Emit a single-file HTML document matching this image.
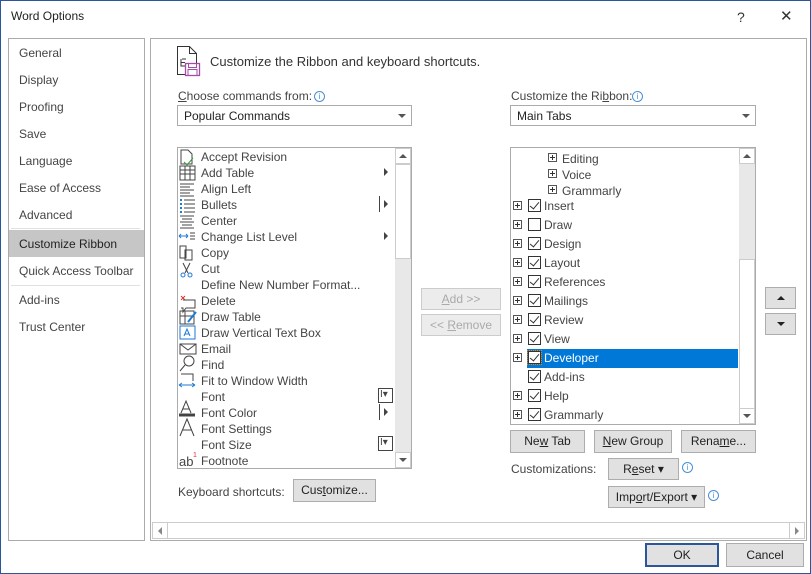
<!DOCTYPE html>
<html><head><meta charset="utf-8"><style>
*{box-sizing:border-box;margin:0;padding:0}
body{width:811px;height:574px;overflow:hidden;background:#fff;font-family:"Liberation Sans",sans-serif;font-size:12px;color:#444;position:relative}
.a{position:absolute}
.frame{left:0;top:0;width:811px;height:574px;border:1px solid #2b579a}
.box{border:1px solid #ababab;background:#fff}
.btn{position:absolute;background:#e1e1e1;border:1px solid #adadad;color:#222;text-align:center;font-size:12px}
.nav{left:19px;font-size:12px;color:#444}
.li{position:absolute;left:23px;font-size:12px;color:#444;white-space:nowrap}
.ri{position:absolute;font-size:12px;color:#444;white-space:nowrap}
.pl{position:absolute;width:9px;height:9px;border:1px solid #555;}
.pl:before{content:"";position:absolute;left:1px;top:3px;width:5px;height:1px;background:#333}
.pl:after{content:"";position:absolute;left:3px;top:1px;width:1px;height:5px;background:#333}
.cb{position:absolute;width:13px;height:13px;border:1px solid #333;background:#fff}
.cb.c:after{content:"";position:absolute;left:3px;top:0px;width:4px;height:8px;border-right:1.3px solid #333;border-bottom:1.3px solid #333;transform:rotate(40deg)}
.arr{position:absolute;width:0;height:0;border-left:4px solid transparent;border-right:4px solid transparent}
u{text-decoration:underline}
.info{position:absolute;width:11px;height:11px;border:1px solid #4a8fd6;border-radius:50%;color:#4a8fd6;font-size:8px;line-height:9px;text-align:center}
</style></head><body>
<div class="a frame"></div>
<div class="a" style="left:11px;top:9px;font-size:12px;color:#222">Word Options</div>
<div class="a" style="left:737px;top:9px;font-size:14px;color:#333">?</div>
<div class="a" style="left:780px;top:7px;font-size:15px;color:#333">✕</div>

<!-- nav -->
<div class="a box" style="left:8px;top:38px;width:137px;height:503px"></div>
<div class="a nav" style="top:46px">General</div>
<div class="a nav" style="top:73px">Display</div>
<div class="a nav" style="top:100px">Proofing</div>
<div class="a nav" style="top:127px">Save</div>
<div class="a nav" style="top:154px">Language</div>
<div class="a nav" style="top:181px">Ease of Access</div>
<div class="a nav" style="top:208px">Advanced</div>
<div class="a" style="left:11px;top:228px;width:129px;height:1px;background:#e1e1e1"></div>
<div class="a" style="left:9px;top:230px;width:135px;height:27px;background:#c6c6c6"></div>
<div class="a nav" style="top:237px;color:#222">Customize Ribbon</div>
<div class="a nav" style="top:264px">Quick Access Toolbar</div>
<div class="a" style="left:11px;top:285px;width:129px;height:1px;background:#e1e1e1"></div>
<div class="a nav" style="top:293px">Add-ins</div>
<div class="a nav" style="top:320px">Trust Center</div>

<!-- main -->
<div class="a box" style="left:150px;top:38px;width:657px;height:503px"></div>
<svg class="a" style="left:176px;top:45px" width="30" height="32" viewBox="0 0 30 32"><path d="M1.5 1.5h12l7 7v21h-19z" fill="#fff" stroke="#333"/><path d="M13.5 1.5v7h7" fill="none" stroke="#333"/><path d="M6 14h4M5 14v7h4M5 17.5h4" stroke="#333" fill="none"/><rect x="9.5" y="18.5" width="14" height="12" fill="#fff" stroke="#a64ca6" stroke-width="1.3"/><rect x="12.5" y="18.5" width="8" height="4" fill="none" stroke="#a64ca6"/><rect x="12" y="24.5" width="9" height="6" fill="none" stroke="#a64ca6"/></svg>
<div class="a" style="left:210px;top:54px;font-size:13px;color:#333">Customize the Ribbon and keyboard shortcuts.</div>

<div class="a" style="left:178px;top:89px"><u>C</u>hoose commands from:</div>
<div class="info" style="left:314px;top:91px">i</div>
<div class="a box" style="left:177px;top:105px;width:235px;height:21px"></div>
<div class="a" style="left:184px;top:109px;color:#222">Popular Commands</div>
<div class="arr" style="left:398px;top:114px;border-top:4px solid #555"></div>

<div class="a" style="left:511px;top:89px">Customize the Ri<u>b</u>bon:</div>
<div class="info" style="left:632px;top:91px">i</div>
<div class="a box" style="left:510px;top:105px;width:246px;height:21px"></div>
<div class="a" style="left:517px;top:109px;color:#222">Main Tabs</div>
<div class="arr" style="left:742px;top:114px;border-top:4px solid #555"></div>

<!-- left list -->
<div class="a box" style="left:177px;top:147px;width:235px;height:322px"></div>
<div class="a" style="left:395px;top:148px;width:16px;height:320px;background:#e8e8e8"></div>
<div class="a" style="left:395px;top:148px;width:16px;height:16px;background:#fff;border:1px solid #ccc"></div>
<div class="arr" style="left:399px;top:154px;border-bottom:4px solid #555"></div>
<div class="a" style="left:395px;top:164px;width:16px;height:95px;background:#fff;border:1px solid #ccc"></div>
<div class="a" style="left:395px;top:452px;width:16px;height:16px;background:#fff;border:1px solid #ccc"></div>
<div class="arr" style="left:399px;top:458px;border-top:4px solid #555"></div>
<div class="a" style="left:178px;top:148px;width:216px;height:320px;overflow:hidden">
<svg class="a" style="left:0;top:0" width="22" height="320" viewBox="0 0 22 320" fill="none" stroke="#444">
<path d="M3 2h7l4 4v10H3z"/><path d="M6 14l3 3 6-7" stroke="#3a9a3a"/>
<rect x="2" y="18" width="15" height="14"/><path d="M2 22h15M2 26h15M7 18v14M12 18v14"/>
<path d="M2 36h14M2 39h10M2 42h14M2 45h10M2 48h14"/>
<path d="M6 52h11M6 56h11M6 60h11M6 64h11" /><path d="M2 52h2M2 56h2M2 60h2M2 64h2" stroke="#1e7ad6" stroke-width="2"/>
<path d="M2 68h14M4 71h10M2 74h14M4 77h10M2 80h14"/>
<path d="M1 88h9M1 88l2-2M1 88l2 2M10 88l-2-2M10 88l-2 2" stroke="#1e7ad6"/><path d="M12 85h5M12 88h5M12 91h5"/>
<path d="M2 98h6v12H2zM7 102h7v10H7z"/>
<path d="M5 115l5 10M12 115l-5 10" /><circle cx="5" cy="127" r="2" stroke="#1e7ad6"/><circle cx="12" cy="127" r="2" stroke="#1e7ad6"/>
<path d="M3 148l4 4M7 148l-4 4" stroke="#e03030"/><path d="M5 152h12v8H8l-3 4v-4H3"/>
<rect x="2" y="163" width="14" height="13"/><path d="M2 168h14M7 163v13"/><path d="M10 174l8-10" stroke="#1e7ad6" stroke-width="2"/>
<rect x="2" y="178" width="15" height="13" stroke="#1e7ad6"/><path d="M6 188l3-7 3 7M7 186h4" stroke="#1e7ad6"/>
<path d="M2 196h16v10H2zM2 196l8 6 8-6"/>
<circle cx="11" cy="213" r="5"/><path d="M7 217l-5 6"/>
<path d="M3 226h12v7" /><path d="M1 237h16M1 237l3-2M1 237l3 2M17 237l-3-2M17 237l-3 2" stroke="#1e7ad6"/>
<path d="M3 265l5-12 5 12M4.5 261h7"/><path d="M1 267h16" stroke="#444" stroke-width="3"/>
<path d="M2 288l7-17 7 17M4.5 282h9"/>
<text x="1" y="318" font-size="13" fill="#444" stroke="none" font-family="Liberation Sans">ab</text><text x="15" y="309" font-size="7" fill="#e03030" stroke="none" font-family="Liberation Sans">1</text>
</svg>
<div class="li" style="top:2px">Accept Revision</div>
<div class="li" style="top:18px">Add Table</div>
<div class="li" style="top:34px">Align Left</div>
<div class="li" style="top:50px">Bullets</div>
<div class="li" style="top:66px">Center</div>
<div class="li" style="top:82px">Change List Level</div>
<div class="li" style="top:98px">Copy</div>
<div class="li" style="top:114px">Cut</div>
<div class="li" style="top:130px">Define New Number Format...</div>
<div class="li" style="top:146px">Delete</div>
<div class="li" style="top:162px">Draw Table</div>
<div class="li" style="top:178px">Draw Vertical Text Box</div>
<div class="li" style="top:194px">Email</div>
<div class="li" style="top:210px">Find</div>
<div class="li" style="top:226px">Fit to Window Width</div>
<div class="li" style="top:242px">Font</div>
<div class="li" style="top:258px">Font Color</div>
<div class="li" style="top:274px">Font Settings</div>
<div class="li" style="top:290px">Font Size</div>
<div class="li" style="top:306px">Footnote</div>
</div>
<div class="a" style="left:384px;top:168px;border-left:4px solid #444;border-top:4px solid transparent;border-bottom:4px solid transparent"></div>
<div class="a" style="left:379px;top:196px;width:1px;height:16px;background:#444"></div>
<div class="a" style="left:384px;top:200px;border-left:4px solid #444;border-top:4px solid transparent;border-bottom:4px solid transparent"></div>
<div class="a" style="left:384px;top:232px;border-left:4px solid #444;border-top:4px solid transparent;border-bottom:4px solid transparent"></div>
<div class="a" style="left:378px;top:388px;width:15px;height:15px;border:1px solid #444;font-size:10px;line-height:12px;padding-left:1px">I▾</div>
<div class="a" style="left:379px;top:404px;width:1px;height:16px;background:#444"></div>
<div class="a" style="left:384px;top:408px;border-left:4px solid #444;border-top:4px solid transparent;border-bottom:4px solid transparent"></div>
<div class="a" style="left:378px;top:436px;width:15px;height:15px;border:1px solid #444;font-size:10px;line-height:12px;padding-left:1px">I▾</div>

<!-- middle buttons -->
<div class="btn" style="left:421px;top:288px;width:80px;height:22px;line-height:20px;color:#aaa;border-color:#ccc;background:#ececec"><u>A</u>dd &gt;&gt;</div>
<div class="btn" style="left:421px;top:314px;width:80px;height:22px;line-height:20px;color:#aaa;border-color:#ccc;background:#ececec">&lt;&lt; <u>R</u>emove</div>

<!-- right list -->
<div class="a box" style="left:510px;top:147px;width:246px;height:278px"></div>
<div class="a" style="left:739px;top:148px;width:16px;height:276px;background:#e8e8e8"></div>
<div class="a" style="left:739px;top:148px;width:16px;height:16px;background:#fff;border:1px solid #ccc"></div>
<div class="arr" style="left:743px;top:154px;border-bottom:4px solid #555"></div>
<div class="a" style="left:739px;top:259px;width:16px;height:150px;background:#fff;border:1px solid #ccc"></div>
<div class="a" style="left:739px;top:408px;width:16px;height:16px;background:#fff;border:1px solid #ccc"></div>
<div class="arr" style="left:743px;top:414px;border-top:4px solid #555"></div>
<div class="a" style="left:527px;top:349px;width:211px;height:19px;background:#0078d7"></div>

<div class="pl" style="left:548px;top:153px"></div><div class="ri" style="left:562px;top:152px">Editing</div>
<div class="pl" style="left:548px;top:169px"></div><div class="ri" style="left:562px;top:168px">Voice</div>
<div class="pl" style="left:548px;top:185px"></div><div class="ri" style="left:562px;top:184px">Grammarly</div>

<div class="pl" style="left:513px;top:201px"></div><div class="cb c" style="left:528px;top:199px"></div><div class="ri" style="left:544px;top:199px">Insert</div>
<div class="pl" style="left:513px;top:220px"></div><div class="cb" style="left:528px;top:218px"></div><div class="ri" style="left:544px;top:218px">Draw</div>
<div class="pl" style="left:513px;top:239px"></div><div class="cb c" style="left:528px;top:237px"></div><div class="ri" style="left:544px;top:237px">Design</div>
<div class="pl" style="left:513px;top:258px"></div><div class="cb c" style="left:528px;top:256px"></div><div class="ri" style="left:544px;top:256px">Layout</div>
<div class="pl" style="left:513px;top:277px"></div><div class="cb c" style="left:528px;top:275px"></div><div class="ri" style="left:544px;top:275px">References</div>
<div class="pl" style="left:513px;top:296px"></div><div class="cb c" style="left:528px;top:294px"></div><div class="ri" style="left:544px;top:294px">Mailings</div>
<div class="pl" style="left:513px;top:315px"></div><div class="cb c" style="left:528px;top:313px"></div><div class="ri" style="left:544px;top:313px">Review</div>
<div class="pl" style="left:513px;top:334px"></div><div class="cb c" style="left:528px;top:332px"></div><div class="ri" style="left:544px;top:332px">View</div>
<div class="pl" style="left:513px;top:353px"></div><div class="cb c" style="left:528px;top:351px;outline:1px dotted #f08000"></div><div class="ri" style="left:544px;top:351px;color:#fff">Developer</div>
<div class="cb c" style="left:528px;top:370px"></div><div class="ri" style="left:544px;top:370px">Add-ins</div>
<div class="pl" style="left:513px;top:391px"></div><div class="cb c" style="left:528px;top:389px"></div><div class="ri" style="left:544px;top:389px">Help</div>
<div class="pl" style="left:513px;top:410px"></div><div class="cb c" style="left:528px;top:408px"></div><div class="ri" style="left:544px;top:408px">Grammarly</div>

<div class="btn" style="left:765px;top:287px;width:31px;height:22px"></div><div class="arr" style="left:777px;top:296px;border-bottom:4px solid #222"></div>
<div class="btn" style="left:765px;top:313px;width:31px;height:22px"></div><div class="arr" style="left:777px;top:322px;border-top:4px solid #222"></div>

<div class="btn" style="left:510px;top:430px;width:75px;height:23px;line-height:21px">Ne<u>w</u> Tab</div>
<div class="btn" style="left:594px;top:430px;width:78px;height:23px;line-height:21px"><u>N</u>ew Group</div>
<div class="btn" style="left:681px;top:430px;width:75px;height:23px;line-height:21px">Rena<u>m</u>e...</div>

<div class="a" style="left:511px;top:462px">Customizations:</div>
<div class="btn" style="left:608px;top:458px;width:71px;height:22px;line-height:20px">R<u>e</u>set ▾</div>
<div class="info" style="left:682px;top:462px">i</div>
<div class="btn" style="left:608px;top:486px;width:97px;height:22px;line-height:20px">Imp<u>o</u>rt/Export ▾</div>
<div class="info" style="left:708px;top:490px">i</div>

<div class="a" style="left:178px;top:485px">Keyboard shortcuts:</div>
<div class="btn" style="left:293px;top:479px;width:83px;height:23px;line-height:21px">Cus<u>t</u>omize...</div>

<!-- h scrollbar -->
<div class="a" style="left:152px;top:522px;width:653px;height:17px;border:1px solid #ccc;background:#fff"></div>
<div class="a" style="left:153px;top:523px;width:15px;height:15px;border-right:1px solid #ccc"></div>
<div class="a" style="left:158px;top:527px;border-right:4px solid #888;border-top:4px solid transparent;border-bottom:4px solid transparent"></div>
<div class="a" style="left:789px;top:523px;width:15px;height:15px;border-left:1px solid #ccc"></div>
<div class="a" style="left:795px;top:527px;border-left:4px solid #888;border-top:4px solid transparent;border-bottom:4px solid transparent"></div>

<div class="btn" style="left:645px;top:543px;width:74px;height:24px;line-height:20px;border:2px solid #2b579a">OK</div>
<div class="btn" style="left:726px;top:543px;width:78px;height:24px;line-height:22px">Cancel</div>
</body></html>
